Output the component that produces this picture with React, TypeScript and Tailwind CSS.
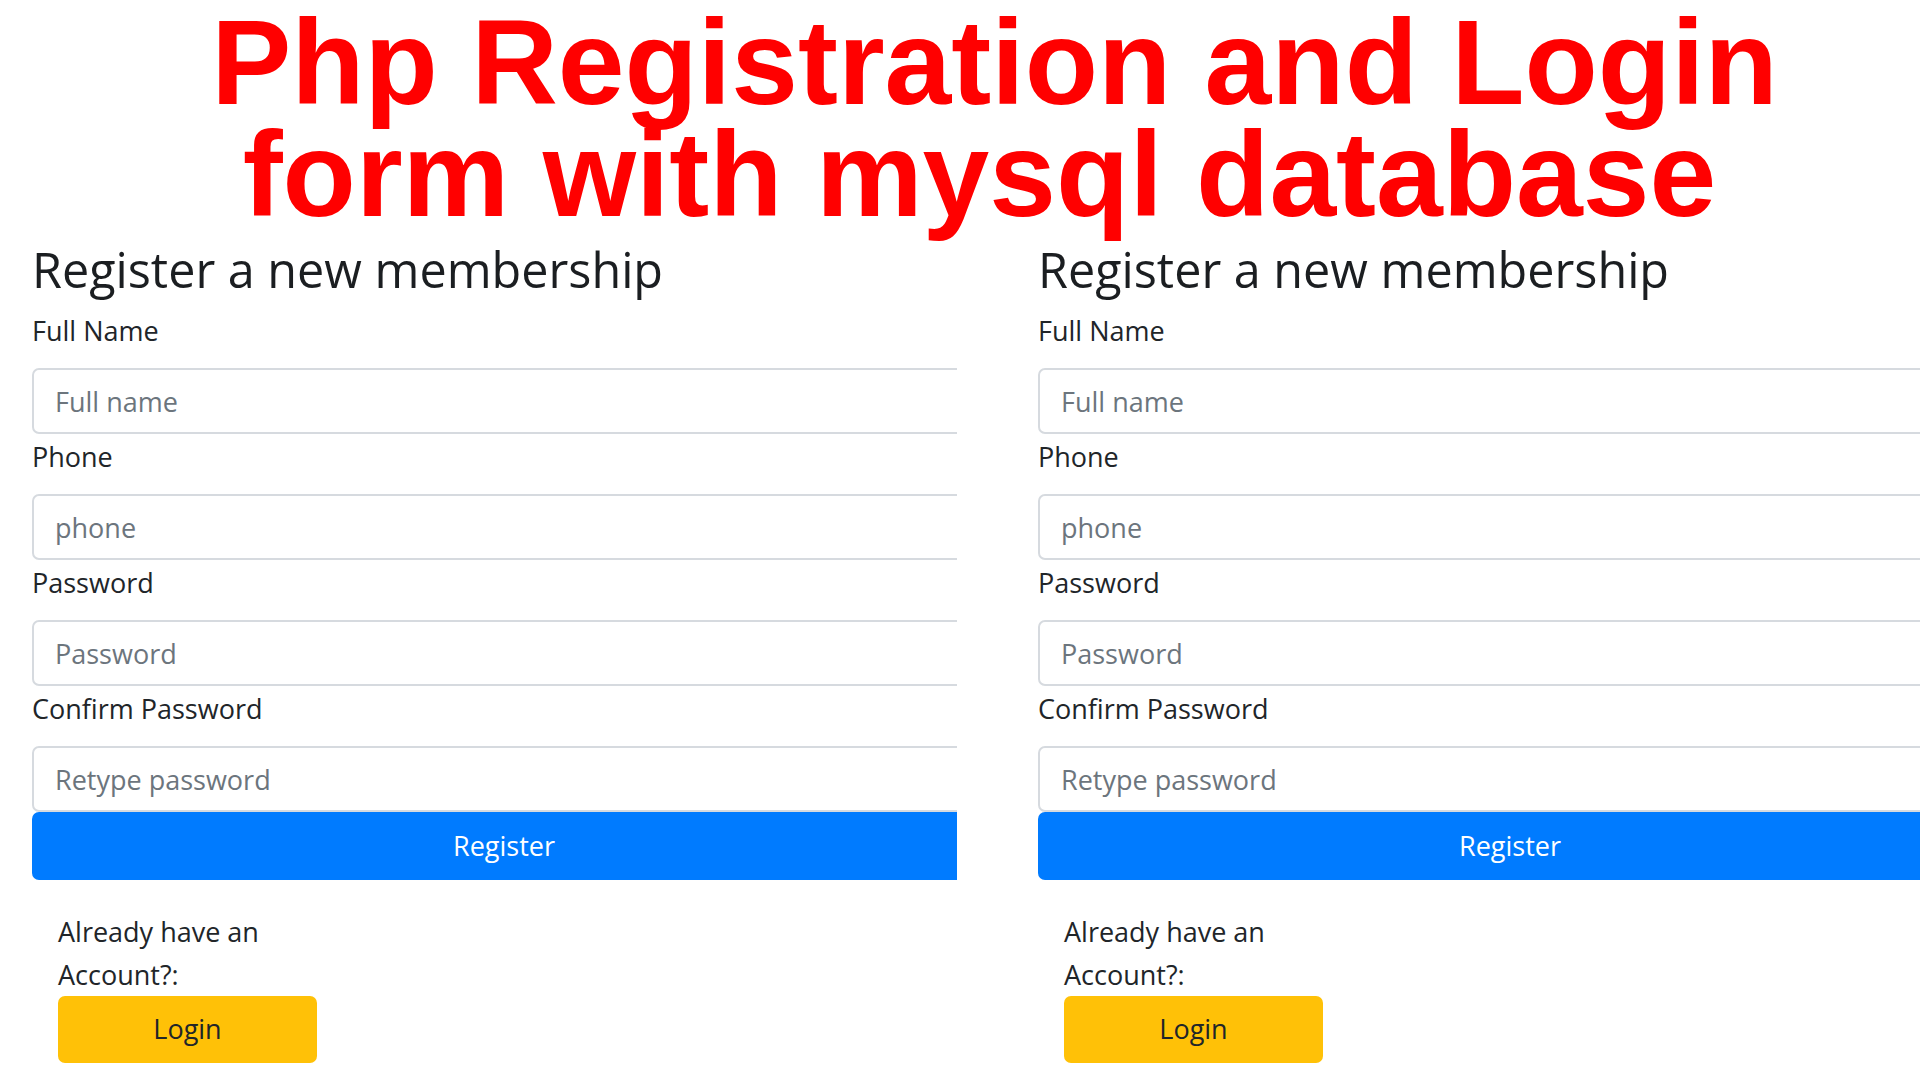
import React from "react";

const fields = [
  { label: "Full Name", placeholder: "Full name", type: "text" },
  { label: "Phone", placeholder: "phone", type: "text" },
  { label: "Password", placeholder: "Password", type: "password" },
  { label: "Confirm Password", placeholder: "Retype password", type: "password" },
];

function RegisterForm() {
  return (
    <div className="w-[944px] shrink-0 text-[#212529]">
      <h3 className="mt-[10px] mb-[12px] text-[48.5px] leading-[58px] font-normal text-[#1b1e21] whitespace-nowrap">
        Register a new membership
      </h3>
      {fields.map((f) => (
        <div key={f.label}>
          <label className="block mt-[2px] mb-[16px] text-[27px] leading-[42px] whitespace-nowrap">
            {f.label}
          </label>
          <input
            type={f.type}
            placeholder={f.placeholder}
            className="block w-full h-[66px] px-[21px] border-2 border-[#d6dadf] rounded-[7px] bg-white text-[27px] outline-none placeholder:text-[#6c757d]"
          />
        </div>
      ))}
      <button className="block w-full h-[68px] rounded-[7px] bg-[#007bff] text-white text-[27px] leading-[68px] text-center">
        Register
      </button>
      <div className="pl-[26px] mt-[30px]">
        <p className="text-[27px] leading-[43px] whitespace-nowrap">
          Already have an
          <br />
          Account?:
        </p>
        <button className="block w-[259px] h-[67px] rounded-[7px] bg-[#ffc107] text-[#212529] text-[27px] text-center">
          Login
        </button>
      </div>
    </div>
  );
}

export default function App() {
  return (
    <div className="w-[1920px] h-[1080px] overflow-hidden bg-white font-['Open_Sans','Segoe_UI',sans-serif]">
      {/* Title */}
      <div className="pt-[6px] font-['Liberation_Sans',Arial,sans-serif] font-bold text-[120px] leading-[112px] text-[#ff0000] whitespace-nowrap">
        <div className="text-center pl-[69px]">Php Registration and Login</div>
        <div className="text-center pl-[39px]">form with mysql database</div>
      </div>

      <div className="flex">
        <div className="w-[957px] shrink-0 overflow-hidden pl-[32px]">
          <RegisterForm />
        </div>
        <div className="flex-1 min-w-0 overflow-hidden pl-[81px]">
          <RegisterForm />
        </div>
      </div>
    </div>
  );
}
